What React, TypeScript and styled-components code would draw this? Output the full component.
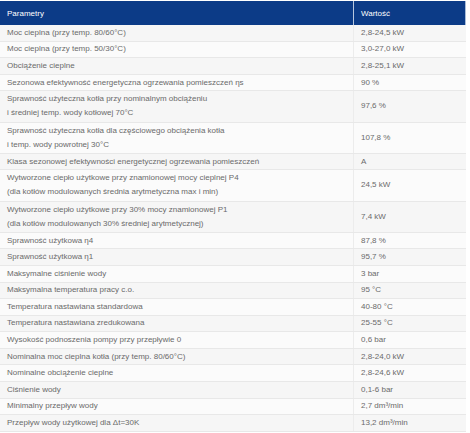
import React from 'react';
import styled, { createGlobalStyle } from 'styled-components';

const GlobalStyle = createGlobalStyle`
  body {
    margin: 0;
    background: #ffffff;
    font-family: 'Liberation Sans', Arial, sans-serif;
  }
`;

const Table = styled.div`
  width: 466px;
  padding-top: 1px;
`;

const HeaderRow = styled.div`
  display: grid;
  grid-template-columns: 353px 113px;
  height: 24px;
  background: #0c3b87;
  border-right: 1px solid #a9bcd8;
`;

const HeaderCell = styled.div<{ $last?: boolean }>`
  display: flex;
  align-items: center;
  padding: 0 7px;
  color: #ffffff;
  font-size: 8px;
  border-left: ${(p) => (p.$last ? '1px solid #b8c7de' : 'none')};
`;

const Row = styled.div<{ $double?: boolean; $odd?: boolean }>`
  box-sizing: border-box;
  display: grid;
  grid-template-columns: 353px 113px;
  height: ${(p) => (p.$double ? '31.2px' : '16.6px')};
  background: ${(p) => (p.$odd ? '#f6f6f6' : '#fbfbfb')};
  border-bottom: 1px solid #e8e8e8;
`;

const Cell = styled.div<{ $last?: boolean }>`
  display: flex;
  flex-direction: column;
  justify-content: center;
  padding: 0 7px;
  color: #6a6a6a;
  font-size: 8px;
  line-height: 14px;
  white-space: nowrap;
  border-left: ${(p) => (p.$last ? '1px solid #ececec' : 'none')};
`;

const rows: Array<{ name: string[]; value: string }> = [
  { name: ['Moc cieplna (przy temp. 80/60°C)'], value: '2,8-24,5 kW' },
  { name: ['Moc cieplna (przy temp. 50/30°C)'], value: '3,0-27,0 kW' },
  { name: ['Obciążenie cieplne'], value: '2,8-25,1 kW' },
  { name: ['Sezonowa efektywność energetyczna ogrzewania pomieszczeń ηs'], value: '90 %' },
  {
    name: ['Sprawność użyteczna kotła przy nominalnym obciążeniu', 'i średniej temp. wody kotłowej 70°C'],
    value: '97,6 %',
  },
  {
    name: ['Sprawność użyteczna kotła dla częściowego obciążenia kotła', 'i temp. wody powrotnej 30°C'],
    value: '107,8 %',
  },
  { name: ['Klasa sezonowej efektywności energetycznej ogrzewania pomieszczeń'], value: 'A' },
  {
    name: [
      'Wytworzone ciepło użytkowe przy znamionowej mocy cieplnej P4',
      '(dla kotłów modulowanych średnia arytmetyczna max i min)',
    ],
    value: '24,5 kW',
  },
  {
    name: [
      'Wytworzone ciepło użytkowe przy 30% mocy znamionowej P1',
      '(dla kotłów modulowanych 30% średniej arytmetycznej)',
    ],
    value: '7,4 kW',
  },
  { name: ['Sprawność użytkowa η4'], value: '87,8 %' },
  { name: ['Sprawność użytkowa η1'], value: '95,7 %' },
  { name: ['Maksymalne ciśnienie wody'], value: '3 bar' },
  { name: ['Maksymalna temperatura pracy c.o.'], value: '95 °C' },
  { name: ['Temperatura nastawiana standardowa'], value: '40-80 °C' },
  { name: ['Temperatura nastawiana zredukowana'], value: '25-55 °C' },
  { name: ['Wysokość podnoszenia pompy przy przepływie 0'], value: '0,6 bar' },
  { name: ['Nominalna moc cieplna kotła (przy temp. 80/60°C)'], value: '2,8-24,0 kW' },
  { name: ['Nominalne obciążenie cieplne'], value: '2,8-24,6 kW' },
  { name: ['Ciśnienie wody'], value: '0,1-6 bar' },
  { name: ['Minimalny przepływ wody'], value: '2,7 dm³/min' },
  { name: ['Przepływ wody użytkowej dla Δt=30K'], value: '13,2 dm³/min' },
];

export default function App() {
  return (
    <>
      <GlobalStyle />
      <Table>
        <HeaderRow>
          <HeaderCell>Parametry</HeaderCell>
          <HeaderCell $last>Wartość</HeaderCell>
        </HeaderRow>
        {rows.map((row, i) => (
          <Row key={i} $double={row.name.length > 1} $odd={i % 2 === 0}>
            <Cell>
              {row.name.map((line) => (
                <span key={line}>{line}</span>
              ))}
            </Cell>
            <Cell $last>{row.value}</Cell>
          </Row>
        ))}
      </Table>
    </>
  );
}
